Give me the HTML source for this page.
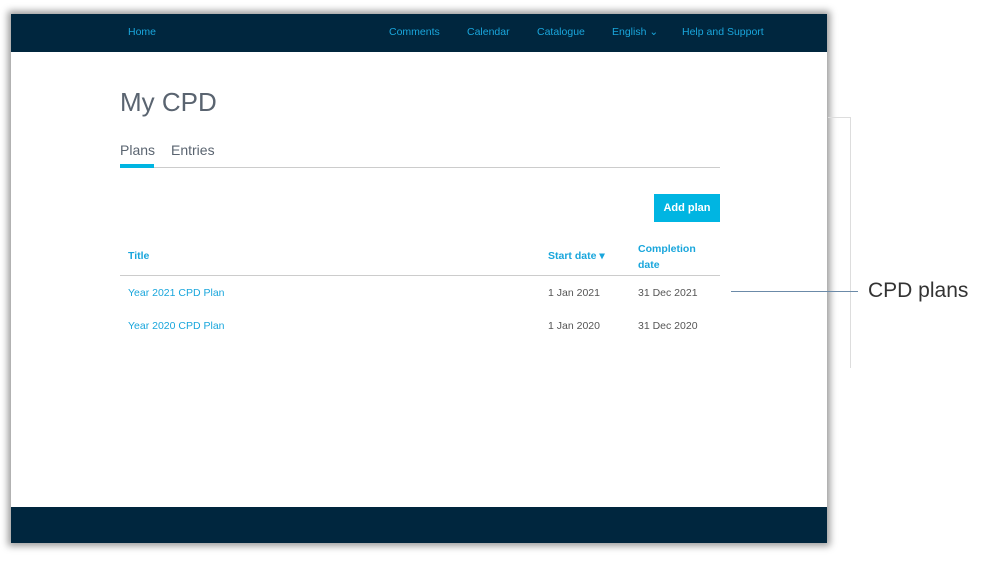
<!DOCTYPE html>
<html><head><style>
body{margin:0;width:997px;height:562px;background:#fff;position:relative;font-family:"Liberation Sans",sans-serif;overflow:hidden}
.frame{position:absolute;left:11px;top:14px;width:816px;height:529px;background:#fff;box-shadow:0 0 7px 3px rgba(0,0,0,.4)}
.nav{position:absolute;left:0;top:0;width:816px;height:38px;background:#00263e}
.nav span{position:absolute;top:12px;font-size:10.5px;color:#19a6dc}
.foot{position:absolute;left:0;bottom:0;width:816px;height:36px;background:#00263e}
.a{position:absolute;font-size:10.5px}
.blue{color:#19a6dc}
.grey{color:#555}
</style></head><body>
<div class="frame">
<div class="nav">
<span style="left:117px">Home</span>
<span style="left:378px">Comments</span>
<span style="left:456px">Calendar</span>
<span style="left:526px">Catalogue</span>
<span style="left:601px">English &#8964;</span>
<span style="left:671px">Help and Support</span>
</div>
<div class="a" style="left:109px;top:73px;font-size:26px;color:#5a6470">My CPD</div>
<div class="a" style="left:109px;top:128px;font-size:14px;color:#5a6470">Plans</div>
<div class="a" style="left:160px;top:128px;font-size:14px;color:#5a6470">Entries</div>
<div style="position:absolute;left:109px;top:153px;width:600px;height:1px;background:#ccc"></div>
<div style="position:absolute;left:109px;top:150px;width:34px;height:4px;background:#00b5e2"></div>
<div style="position:absolute;left:643px;top:180px;width:66px;height:28px;background:#00b5e2;color:#fff;font-size:11px;font-weight:bold;text-align:center;line-height:28px">Add plan</div>
<div class="a blue" style="left:117px;top:236px;font-weight:bold">Title</div>
<div class="a blue" style="left:537px;top:236px;font-weight:bold">Start date &#9662;</div>
<div class="a blue" style="left:627px;top:227px;font-weight:bold;line-height:16px">Completion<br>date</div>
<div style="position:absolute;left:109px;top:261px;width:600px;height:1px;background:#ccc"></div>
<div class="a blue" style="left:117px;top:273px">Year 2021 CPD Plan</div>
<div class="a grey" style="left:537px;top:273px">1 Jan 2021</div>
<div class="a grey" style="left:627px;top:273px">31 Dec 2021</div>
<div class="a blue" style="left:117px;top:306px">Year 2020 CPD Plan</div>
<div class="a grey" style="left:537px;top:306px">1 Jan 2020</div>
<div class="a grey" style="left:627px;top:306px">31 Dec 2020</div>
<div class="foot"></div>
</div>
<div style="position:absolute;left:828px;top:117px;width:22px;height:250px;border-top:1px solid #ddd;border-right:1px solid #ddd"></div>
<div style="position:absolute;left:731px;top:291px;width:127px;height:1px;background:#6b8aa8"></div>
<div style="position:absolute;left:868px;top:279px;font-size:21px;color:#333">CPD plans</div>
</body></html>
